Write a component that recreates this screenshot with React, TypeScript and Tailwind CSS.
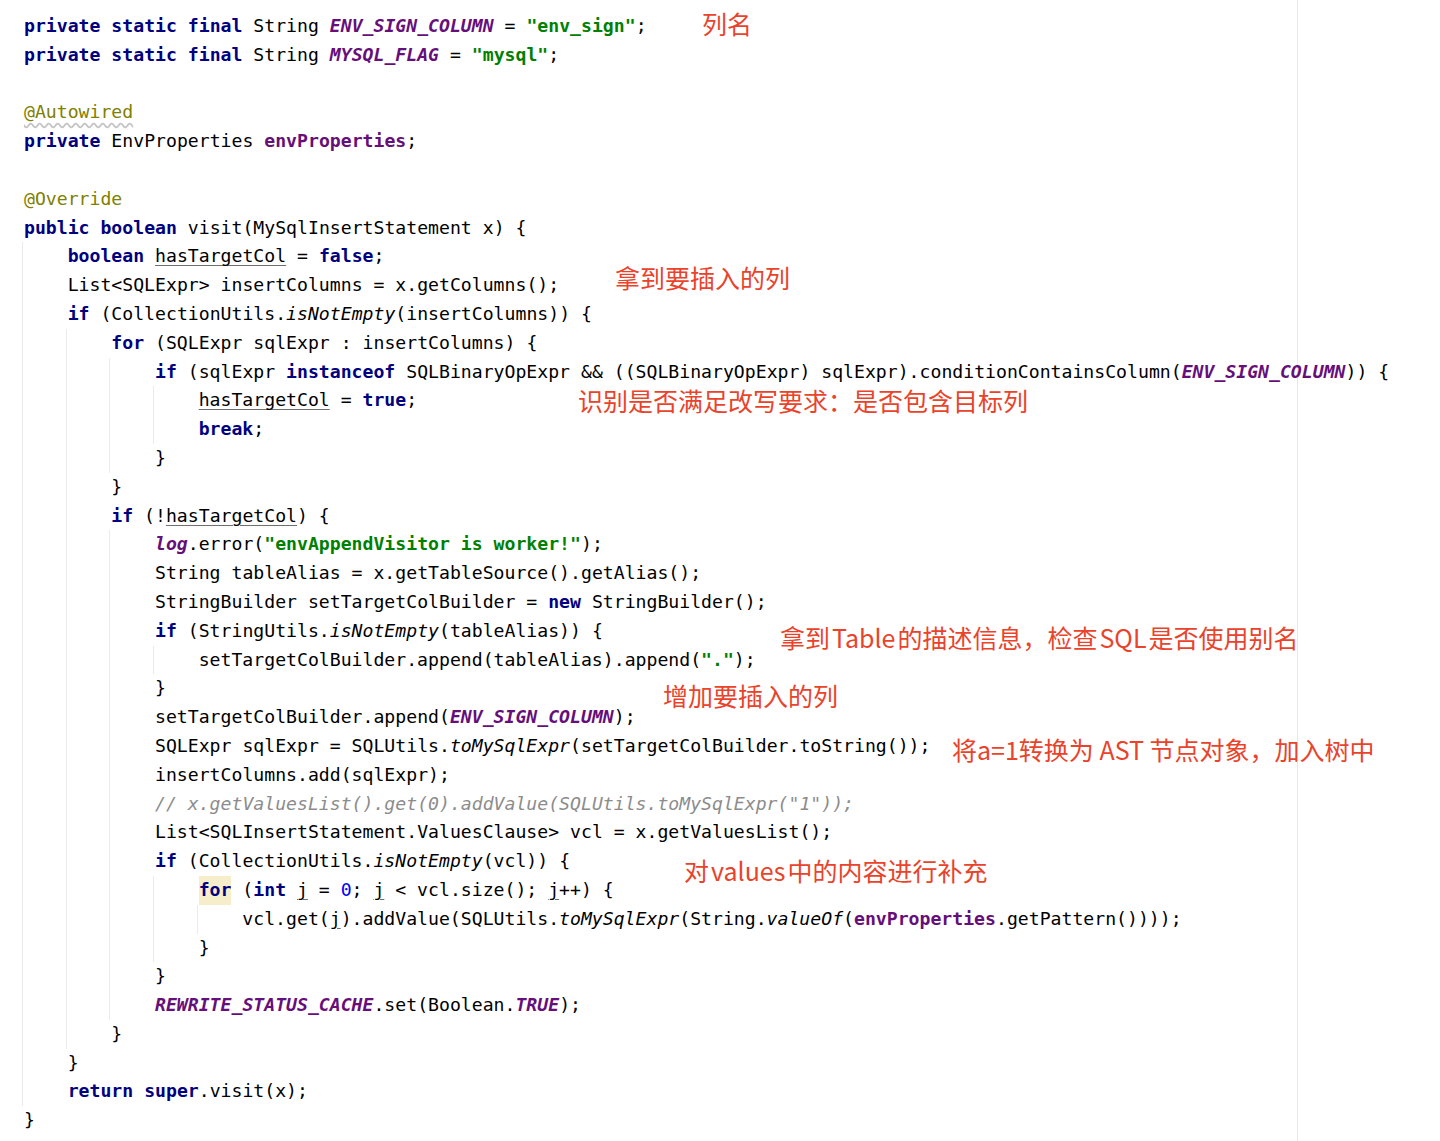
import React from 'react';

type P = { children?: React.ReactNode };

// token styles (IntelliJ classic light)
const K = ({ children }: P) => <span className="font-bold text-[#000080]">{children}</span>;
const S = ({ children }: P) => <span className="font-bold text-[#008000]">{children}</span>;
const C = ({ children }: P) => <span className="font-bold italic text-[#660e7a]">{children}</span>;
const F = ({ children }: P) => <span className="font-bold text-[#660e7a]">{children}</span>;
const I = ({ children }: P) => <span className="italic">{children}</span>;
const U = ({ children }: P) => (
  <span className="underline decoration-[#6f6f6f] decoration-1 underline-offset-[3px]">{children}</span>
);
const N = ({ children }: P) => <span className="text-[#0000ff]">{children}</span>;
const Cm = ({ children }: P) => <span className="italic text-[#8c8c8c]">{children}</span>;

const L = ({ children }: P) => <div className="h-[28.8px]">{children}</div>;

// indented body with indent guide
const Block = ({ children }: P) => (
  <div className="-ml-[2px] border-l border-[#ebebeb] pl-[calc(4ch_+_1px)]">{children}</div>
);

const Note = ({ children, className }: P & { className: string }) => (
  <span
    className={
      'absolute whitespace-nowrap font-["Noto_Sans_CJK_SC",sans-serif] text-[25px] leading-[25px] text-[#e9432b] ' +
      className
    }
  >
    {children}
  </span>
);

const W = ({ children }: P) => <span className="mx-[2px]">{children}</span>;

export default function App() {
  return (
    <div className="relative h-[1141px] w-[1440px] overflow-hidden bg-white">
      <div className="h-full w-[1298px] whitespace-pre border-r border-[#e8e8e8] pl-6 pt-[12px] font-['DejaVu_Sans_Mono',monospace] text-[18.15px] leading-[28.8px] text-black">
        <L><K>private static final</K> String <C>ENV_SIGN_COLUMN</C> = <S>"env_sign"</S>;</L>
        <L><K>private static final</K> String <C>MYSQL_FLAG</C> = <S>"mysql"</S>;</L>
        <L />
        <L><span className="text-[#808000] underline decoration-wavy decoration-[#c4c4c4] underline-offset-[4px]">@Autowired</span></L>
        <L><K>private</K> EnvProperties <F>envProperties</F>;</L>
        <L />
        <L><span className="text-[#808000]">@Override</span></L>
        <L><K>public boolean</K> visit(MySqlInsertStatement x) {'{'}</L>
        <Block>
          <L><K>boolean</K> <U>hasTargetCol</U> = <K>false</K>;</L>
          <L>List&lt;SQLExpr&gt; insertColumns = x.getColumns();</L>
          <L><K>if</K> (CollectionUtils.<I>isNotEmpty</I>(insertColumns)) {'{'}</L>
          <Block>
            <L><K>for</K> (SQLExpr sqlExpr : insertColumns) {'{'}</L>
            <Block>
              <L><K>if</K> (sqlExpr <K>instanceof</K> SQLBinaryOpExpr &amp;&amp; ((SQLBinaryOpExpr) sqlExpr).conditionContainsColumn(<C>ENV_SIGN_COLUMN</C>)) {'{'}</L>
              <Block>
                <L><U>hasTargetCol</U> = <K>true</K>;</L>
                <L><K>break</K>;</L>
              </Block>
              <L>{'}'}</L>
            </Block>
            <L>{'}'}</L>
            <L><K>if</K> (!<U>hasTargetCol</U>) {'{'}</L>
            <Block>
              <L><C>log</C>.error(<S>"envAppendVisitor is worker!"</S>);</L>
              <L>String tableAlias = x.getTableSource().getAlias();</L>
              <L>StringBuilder setTargetColBuilder = <K>new</K> StringBuilder();</L>
              <L><K>if</K> (StringUtils.<I>isNotEmpty</I>(tableAlias)) {'{'}</L>
              <Block>
                <L>setTargetColBuilder.append(tableAlias).append(<S>"."</S>);</L>
              </Block>
              <L>{'}'}</L>
              <L>setTargetColBuilder.append(<C>ENV_SIGN_COLUMN</C>);</L>
              <L>SQLExpr sqlExpr = SQLUtils.<I>toMySqlExpr</I>(setTargetColBuilder.toString());</L>
              <L>insertColumns.add(sqlExpr);</L>
              <L><Cm>// x.getValuesList().get(0).addValue(SQLUtils.toMySqlExpr("1"));</Cm></L>
              <L>List&lt;SQLInsertStatement.ValuesClause&gt; vcl = x.getValuesList();</L>
              <L><K>if</K> (CollectionUtils.<I>isNotEmpty</I>(vcl)) {'{'}</L>
              <Block>
                <L><span className="inline-block bg-[#f6eecb] font-bold text-[#000080]">for</span> (<K>int</K> <U>j</U> = <N>0</N>; <U>j</U> &lt; vcl.size(); <U>j</U>++) {'{'}</L>
                <Block>
                  <L>vcl.get(<U>j</U>).addValue(SQLUtils.<I>toMySqlExpr</I>(String.<I>valueOf</I>(<F>envProperties</F>.getPattern())));</L>
                </Block>
                <L>{'}'}</L>
              </Block>
              <L>{'}'}</L>
              <L><C>REWRITE_STATUS_CACHE</C>.set(Boolean.<C>TRUE</C>);</L>
            </Block>
            <L>{'}'}</L>
          </Block>
          <L>{'}'}</L>
          <L><K>return</K> <K>super</K>.visit(x);</L>
        </Block>
        <L>{'}'}</L>
      </div>

      <Note className="left-[702px] top-[11px]">列名</Note>
      <Note className="left-[615px] top-[265px]">拿到要插入的列</Note>
      <Note className="left-[578px] top-[388px]">识别是否满足改写要求：是否包含目标列</Note>
      <Note className="left-[780px] top-[625px]">拿到<W>Table</W>的描述信息，检查<W>SQL</W>是否使用别名</Note>
      <Note className="left-[663px] top-[683px]">增加要插入的列</Note>
      <Note className="left-[952px] top-[737px]">将a=1转换为 AST 节点对象，加入树中</Note>
      <Note className="left-[684px] top-[858px]">对<W>values</W>中的内容进行补充</Note>
    </div>
  );
}
